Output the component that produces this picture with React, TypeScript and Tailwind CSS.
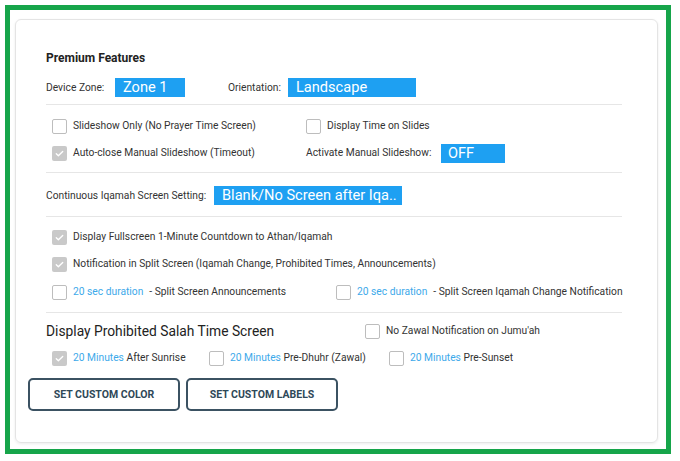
import React from "react";

const font = { fontFamily: "Roboto, 'Liberation Sans', sans-serif" };

function Box({ checked }: { checked?: boolean }) {
  return checked ? (
    <span className="flex h-[15px] w-[15px] shrink-0 items-center justify-center rounded-[2px] bg-[#c9c9c9]">
      <svg width="11" height="11" viewBox="0 0 24 24" fill="none" stroke="white" strokeWidth="3" strokeLinecap="round" strokeLinejoin="round">
        <path d="M5 12.5l4.5 4.5L19 7.5" />
      </svg>
    </span>
  ) : (
    <span className="h-[15px] w-[15px] shrink-0 rounded-[2px] border border-[#bdbdbd] bg-white" />
  );
}

function Blue({ w, children, pl = "pl-[8px]" }: { w: string; children: React.ReactNode; pl?: string }) {
  return (
    <div className={`flex h-[19px] items-center overflow-hidden whitespace-nowrap bg-[#1ea0f2] text-[14.6px] leading-none text-white ${w} ${pl}`}>
      {children}
    </div>
  );
}

function Divider({ mt }: { mt: string }) {
  return <div className={`h-px w-[576px] bg-[#e6e6e6] ${mt}`} />;
}

export default function App() {
  return (
    <div className="h-[461px] w-[680px] bg-white pl-[5px] pt-[5px]" style={font}>
      <div className="h-[449px] w-[666px] border-[5px] border-[#16a54a] pl-[5px] pt-[9px]">
        <div className="h-[424px] w-[643px] rounded-[6px] border border-[#e4e4e4] pl-[30px] text-[10.25px] text-[#333] shadow-[0_1px_3px_rgba(0,0,0,0.08)]">
          <div className="mt-[30px] flex h-[16px] items-center text-[12px] font-bold text-[#222]">Premium Features</div>

          <div className="mt-[12px] flex h-[19px] items-center">
            <span className="w-[69px]">Device Zone:</span>
            <Blue w="w-[70px]">Zone 1</Blue>
            <span className="ml-[43px] w-[60px]">Orientation:</span>
            <Blue w="w-[128px]">Landscape</Blue>
          </div>

          <Divider mt="mt-[7px]" />

          <div className="mt-[11px] flex h-[20px] items-center pl-[6px]">
            <div className="flex w-[254px] items-center gap-[6px]">
              <Box />
              <span>Slideshow Only (No Prayer Time Screen)</span>
            </div>
            <div className="flex items-center gap-[6px]">
              <Box />
              <span>Display Time on Slides</span>
            </div>
          </div>

          <div className="mt-[7px] flex h-[20px] items-center pl-[6px]">
            <div className="flex w-[254px] items-center gap-[6px]">
              <Box checked />
              <span>Auto-close Manual Slideshow (Timeout)</span>
            </div>
            <span className="w-[135px]">Activate Manual Slideshow:</span>
            <Blue w="w-[64px]" pl="pl-[7px]">OFF</Blue>
          </div>

          <Divider mt="mt-[9px]" />

          <div className="mt-[13px] flex h-[19px] items-center">
            <span className="w-[168px]">Continuous Iqamah Screen Setting:</span>
            <Blue w="w-[188px]">Blank/No Screen after Iqa..</Blue>
          </div>

          <Divider mt="mt-[11px]" />

          <div className="mt-[10px] flex h-[20px] items-center gap-[6px] pl-[6px]">
            <Box checked />
            <span>Display Fullscreen 1-Minute Countdown to Athan/Iqamah</span>
          </div>
          <div className="mt-[7px] flex h-[20px] items-center gap-[6px] pl-[6px]">
            <Box checked />
            <span>Notification in Split Screen (Iqamah Change, Prohibited Times, Announcements)</span>
          </div>
          <div className="mt-[8px] flex h-[20px] items-center pl-[6px]">
            <div className="flex w-[284px] items-center gap-[6px]">
              <Box />
              <span>
                <span className="text-[#3da9ea]">20 sec duration</span>
                <span className="ml-[6px]">- Split Screen Announcements</span>
              </span>
            </div>
            <div className="flex items-center gap-[6px]">
              <Box />
              <span>
                <span className="text-[#3da9ea]">20 sec duration</span>
                <span className="ml-[6px]">- Split Screen Iqamah Change Notification</span>
              </span>
            </div>
          </div>

          <Divider mt="mt-[10px]" />

          <div className="mt-[8px] flex h-[20px] items-center">
            <span className="w-[319px] text-[13.8px] text-[#222]">Display Prohibited Salah Time Screen</span>
            <div className="flex items-center gap-[6px]">
              <Box />
              <span>No Zawal Notification on Jumu'ah</span>
            </div>
          </div>

          <div className="mt-[7px] flex h-[20px] items-center pl-[6px]">
            <div className="flex w-[157px] items-center gap-[6px]">
              <Box checked />
              <span>
                <span className="text-[#3da9ea]">20 Minutes</span> After Sunrise
              </span>
            </div>
            <div className="flex w-[180px] items-center gap-[6px]">
              <Box />
              <span>
                <span className="text-[#3da9ea]">20 Minutes</span> Pre-Dhuhr (Zawal)
              </span>
            </div>
            <div className="flex items-center gap-[6px]">
              <Box />
              <span>
                <span className="text-[#3da9ea]">20 Minutes</span> Pre-Sunset
              </span>
            </div>
          </div>

          <div className="-ml-[18px] mt-[10px] flex gap-[6px]">
            <button className="h-[33px] w-[152px] rounded-[5px] border-2 border-[#3b5262] text-[10.5px] font-bold text-[#2e4858]">
              SET CUSTOM COLOR
            </button>
            <button className="h-[33px] w-[152px] rounded-[5px] border-2 border-[#3b5262] text-[10.5px] font-bold text-[#2e4858]">
              SET CUSTOM LABELS
            </button>
          </div>
        </div>
      </div>
    </div>
  );
}
